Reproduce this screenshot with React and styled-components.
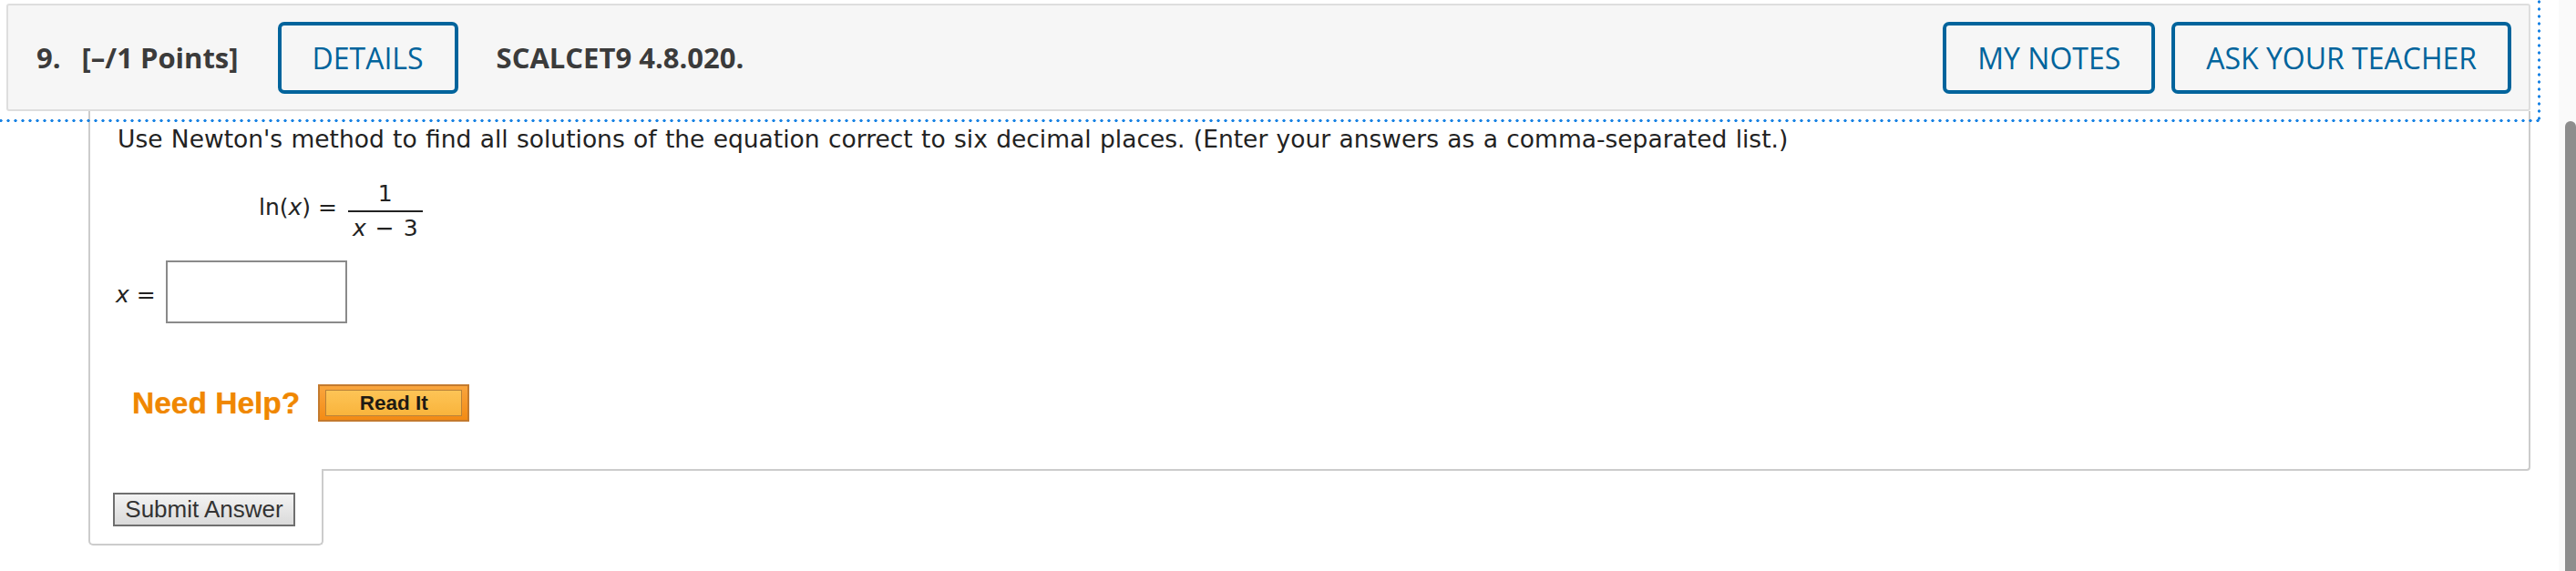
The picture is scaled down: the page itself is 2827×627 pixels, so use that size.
import React from 'react';
import styled, { createGlobalStyle } from 'styled-components';

const GlobalStyle = createGlobalStyle`
  html, body {
    margin: 0;
    padding: 0;
    background: #ffffff;
  }
  body {
    width: 2827px;
    height: 627px;
    overflow: hidden;
  }
`;

const Page = styled.div`
  position: relative;
  width: 2827px;
  height: 627px;
  overflow: hidden;
`;

const dot = 'radial-gradient(circle, #1b84e4 1.4px, transparent 1.9px)';

const HeaderWrap = styled.div`
  position: relative;
  padding: 4px 0 0 7px;

  /* keyboard focus ring drawn over the header */
  &::after {
    content: '';
    position: absolute;
    left: -3px;
    top: -10px;
    width: 2791px;
    height: 144px;
    pointer-events: none;
    background: ${dot} left bottom / 8px 3px repeat-x,
      ${dot} right top / 3px 8px repeat-y, ${dot} left top / 8px 3px repeat-x,
      ${dot} left top / 3px 8px repeat-y;
  }
`;

const Panel = styled.div`
  box-sizing: border-box;
  width: 2770px;
  height: 118px;
  display: flex;
  align-items: center;
  padding: 0 19px 0 31px;
  background: #f6f6f6;
  border: 2px solid #dedede;
  border-radius: 3px;
  font-family: 'Open Sans', 'Liberation Sans', sans-serif;
  font-size: 31px;
  color: #3b3b3b;
`;

const HeadText = styled.span`
  font-weight: 700;
  white-space: nowrap;
  margin-right: ${(props) => props.gap || 0}px;
`;

const OutlineButton = styled.button`
  box-sizing: border-box;
  height: 79px;
  padding: 0 34px;
  margin-right: ${(props) => props.gap || 0}px;
  background: transparent;
  border: 4px solid #00649c;
  border-radius: 7px;
  color: #00649c;
  font-family: 'Open Sans', 'Liberation Sans', sans-serif;
  font-size: 32px;
  font-weight: 500;
  white-space: nowrap;
  cursor: pointer;
`;

const RightGroup = styled.div`
  margin-left: auto;
  display: flex;
  gap: 18px;
`;

const Card = styled.div`
  box-sizing: border-box;
  width: 2680px;
  height: 395px;
  margin-left: 97px;
  padding: 14px 0 0 30px;
  border: 2px solid #cccccc;
  border-top: none;
  border-radius: 0 0 4px 0;
  font-family: 'DejaVu Sans', Verdana, sans-serif;
  font-size: 25px;
  color: #222222;
`;

const Prompt = styled.div`
  font-size: 26.5px;
  word-spacing: 0.9px;
  line-height: 33px;
  white-space: nowrap;
`;

const EquationRow = styled.div`
  display: flex;
  align-items: center;
  margin: 30px 0 0 155px;
`;

const Lhs = styled.span`
  line-height: 30px;
  padding-bottom: 8px;
  margin-right: 12px;
  white-space: nowrap;
`;

const Var = styled.i`
  font-style: italic;
`;

const Fraction = styled.span`
  display: inline-flex;
  flex-direction: column;
  align-items: center;
`;

const Num = styled.span`
  line-height: 28px;
  padding-bottom: 4px;
`;

const Bar = styled.span`
  align-self: stretch;
  height: 2px;
  background: #222222;
`;

const Den = styled.span`
  line-height: 28px;
  padding: 4px 5px 0;
  word-spacing: 2px;
  white-space: nowrap;
`;

const AnswerRow = styled.div`
  display: flex;
  align-items: center;
  margin: 21px 0 0 -2px;
`;

const AnswerLabel = styled.span`
  padding-top: 6px;
  margin-right: 11px;
  white-space: nowrap;
`;

const AnswerInput = styled.input`
  box-sizing: border-box;
  width: 199px;
  height: 69px;
  border: 2px solid #8a8a8a;
  background: #ffffff;
  outline: none;
`;

const HelpRow = styled.div`
  display: flex;
  align-items: center;
  gap: 20px;
  margin: 67px 0 0 16px;
`;

const HelpLabel = styled.span`
  font-family: 'Liberation Sans', Arial, sans-serif;
  font-weight: 700;
  font-size: 33.5px;
  color: #f08700;
  text-shadow: 0 0 1px rgba(240, 135, 0, 0.6);
`;

const ReadItButton = styled.button`
  box-sizing: border-box;
  display: flex;
  width: 166px;
  height: 41px;
  padding: 4px 6px;
  background: linear-gradient(#f9a53e, #f38b14);
  border: 2px solid #c37a2e;
  cursor: pointer;
`;

const ReadItFace = styled.span`
  flex: 1;
  display: flex;
  align-items: center;
  justify-content: center;
  background: linear-gradient(#fdc456, #f9b43c);
  border: 1px solid #b98238;
  font-family: 'Liberation Sans', Arial, sans-serif;
  font-weight: 700;
  font-size: 22.5px;
  color: #1e1a14;
`;

const SubmitTab = styled.div`
  position: relative;
  box-sizing: border-box;
  width: 258px;
  height: 84px;
  margin: -2px 0 0 97px;
  padding: 26px 0 0 25px;
  background: #ffffff;
  border: 2px solid #cccccc;
  border-top: none;
  border-radius: 0 0 5px 5px;
`;

const SubmitButton = styled.button`
  box-sizing: border-box;
  width: 200px;
  height: 37px;
  padding: 0;
  background: linear-gradient(#f3f3f3, #dadada);
  border: 2px solid #6f6f6f;
  font-family: 'Liberation Sans', Arial, sans-serif;
  font-size: 26px;
  color: #333333;
  cursor: pointer;
`;

const ScrollTrack = styled.div`
  position: absolute;
  top: 0;
  right: 0;
  width: 19px;
  height: 627px;
  background: #fafafa;
`;

const ScrollThumb = styled.div`
  position: absolute;
  top: 133px;
  right: 0;
  width: 12px;
  height: 520px;
  background: #8d8d8d;
  border-radius: 6px 6px 0 0;
`;

function App() {
  return (
    <Page>
      <GlobalStyle />
      <HeaderWrap>
        <Panel>
          <HeadText gap={23}>9.</HeadText>
          <HeadText gap={43}>[–/1 Points]</HeadText>
          <OutlineButton gap={42}>DETAILS</OutlineButton>
          <HeadText>SCALCET9 4.8.020.</HeadText>
          <RightGroup>
            <OutlineButton>MY NOTES</OutlineButton>
            <OutlineButton>ASK YOUR TEACHER</OutlineButton>
          </RightGroup>
        </Panel>
      </HeaderWrap>
      <Card>
        <Prompt>
          Use Newton's method to find all solutions of the equation correct to
          six decimal places. (Enter your answers as a comma-separated list.)
        </Prompt>
        <EquationRow>
          <Lhs>
            ln(<Var>x</Var>) =
          </Lhs>
          <Fraction>
            <Num>1</Num>
            <Bar />
            <Den>
              <Var>x</Var> − 3
            </Den>
          </Fraction>
        </EquationRow>
        <AnswerRow>
          <AnswerLabel>
            <Var>x</Var> =
          </AnswerLabel>
          <AnswerInput type="text" />
        </AnswerRow>
        <HelpRow>
          <HelpLabel>Need Help?</HelpLabel>
          <ReadItButton>
            <ReadItFace>Read It</ReadItFace>
          </ReadItButton>
        </HelpRow>
      </Card>
      <SubmitTab>
        <SubmitButton>Submit Answer</SubmitButton>
      </SubmitTab>
      <ScrollTrack>
        <ScrollThumb />
      </ScrollTrack>
    </Page>
  );
}

export default App;
